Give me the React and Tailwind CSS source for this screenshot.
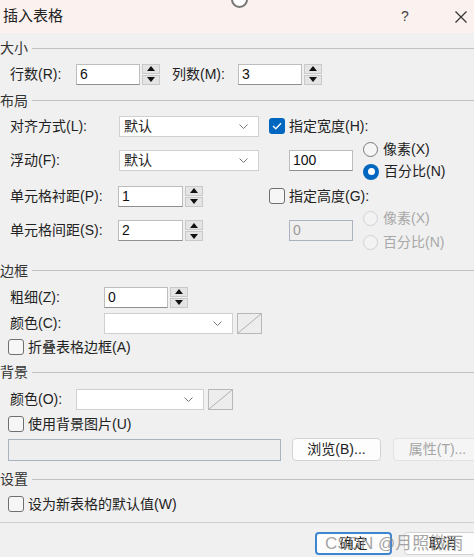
import React from 'react';

const FONT = "font-['Liberation_Sans','Noto_Sans_CJK_SC',sans-serif]";

function Spin() {
  return (
    <div className="ml-[2px] flex h-[21px] w-[18px] flex-col gap-[1px]">
      <div className="flex flex-1 items-center justify-center border border-[#c9c9c9] bg-[#e4e4e4]">
        <svg width="8" height="5" viewBox="0 0 8 5"><path d="M0 5L4 0L8 5Z" fill="#111" /></svg>
      </div>
      <div className="flex flex-1 items-center justify-center border border-[#c9c9c9] bg-[#e4e4e4]">
        <svg width="8" height="5" viewBox="0 0 8 5"><path d="M0 0L4 5L8 0Z" fill="#111" /></svg>
      </div>
    </div>
  );
}

function Field({ value, className }) {
  return (
    <div className={`flex h-[21px] items-center border border-[#bdbdbd] border-b-[#8f8f8f] bg-white pl-[3px] text-[14px] text-[#111] ${className}`}>
      {value}
    </div>
  );
}

function Select({ value, className }) {
  return (
    <div className={`flex h-[21px] items-center justify-between border border-[#d0d0d0] bg-white pl-[4px] pr-[10px] text-[14px] text-[#222] ${className}`}>
      <span>{value}</span>
      <svg width="9" height="5" viewBox="0 0 9 5"><path d="M0.5 0.5L4.5 4.5L8.5 0.5" fill="none" stroke="#777" strokeWidth="1" /></svg>
    </div>
  );
}

function Swatch() {
  return (
    <div className="ml-[4px] h-[21px] w-[25px] border border-[#b8b8b8] bg-[#ededed]">
      <svg width="23" height="19" viewBox="0 0 23 19"><path d="M0 19L23 0" stroke="#b0b0b0" strokeWidth="1" /></svg>
    </div>
  );
}

function Check({ checked, label }) {
  return (
    <div className="flex items-center">
      {checked ? (
        <span className="flex h-[16px] w-[16px] items-center justify-center rounded-[3px] bg-[#0067c0]">
          <svg width="10" height="8" viewBox="0 0 10 8"><path d="M1 4L3.8 6.8L9 1.2" fill="none" stroke="white" strokeWidth="1.3" /></svg>
        </span>
      ) : (
        <span className="h-[16px] w-[16px] rounded-[3px] border border-[#6f6f6f] bg-[#f6f6f6]" />
      )}
      <span className="ml-[4px] text-[14px] text-[#222]">{label}</span>
    </div>
  );
}

function Radio({ checked, disabled, label }) {
  let dot = <span className="h-[15px] w-[15px] rounded-full border border-[#7a7a7a] bg-[#f6f6f6]" />;
  if (checked) {
    dot = (
      <span className="flex h-[16px] w-[16px] items-center justify-center rounded-full bg-[#0067c0]">
        <span className="h-[7px] w-[7px] rounded-full bg-white" />
      </span>
    );
  }
  if (disabled) {
    dot = <span className="h-[15px] w-[15px] rounded-full border border-[#d2d2d2] bg-[#f3f3f3]" />;
  }
  return (
    <div className="flex h-[20px] items-center">
      {dot}
      <span className={disabled ? 'ml-[5px] text-[14px] text-[#a8a8a8]' : 'ml-[5px] text-[14px] text-[#222]'}>{label}</span>
    </div>
  );
}

function Header({ title, className }) {
  return (
    <div className={`flex items-center ${className}`}>
      <span className="text-[14px] leading-none text-[#333]">{title}</span>
      <div className="ml-[4px] flex-1 border-t border-[#c2c2c2]" />
    </div>
  );
}

function Label({ text, className }) {
  return <span className={`shrink-0 text-[14px] text-[#222] ${className}`}>{text}</span>;
}

export default function App() {
  return (
    <div className={`relative h-[557px] w-[474px] overflow-hidden bg-[#f0f0f0] ${FONT}`}>
      {/* title bar */}
      <div className="relative flex h-[33px] items-center bg-[#fbf1ee] pl-[3px]">
        <span className="text-[15px] text-[#222]">插入表格</span>
        <span className="absolute left-[401px] top-[6px] text-[14px] text-[#444]">?</span>
        <svg className="absolute left-[455px] top-[11px]" width="12" height="12" viewBox="0 0 12 12">
          <path d="M0.5 0.5L11.5 11.5M11.5 0.5L0.5 11.5" stroke="#333" strokeWidth="1.2" />
        </svg>
        <div className="absolute left-[231px] top-[-9px] h-[17px] w-[17px] rounded-full border-2 border-[#777] bg-white" />
      </div>

      <Header title="大小" className="h-[30px]" />
      <div className="flex h-[22px] items-center pl-[10px]">
        <Label text="行数(R):" className="w-[66px]" />
        <Field value="6" className="w-[64px]" />
        <Spin />
        <Label text="列数(M):" className="ml-[12px] w-[66px]" />
        <Field value="3" className="w-[64px]" />
        <Spin />
      </div>

      <Header title="布局" className="h-[31px]" />
      <div className="flex h-[20px] items-center pl-[10px]">
        <Label text="对齐方式(L):" className="w-[109px]" />
        <Select value="默认" className="w-[140px]" />
        <div className="ml-[10px]">
          <Check checked label="指定宽度(H):" />
        </div>
      </div>
      <div className="flex h-[49px] items-center pl-[10px]">
        <Label text="浮动(F):" className="w-[109px]" />
        <Select value="默认" className="w-[140px]" />
        <Field value="100" className="ml-[30px] w-[64px]" />
        <div className="ml-[10px] flex flex-col gap-[2px]">
          <Radio label="像素(X)" />
          <Radio checked label="百分比(N)" />
        </div>
      </div>
      <div className="flex h-[22px] items-center pl-[10px]">
        <Label text="单元格衬距(P):" className="w-[108px]" />
        <Field value="1" className="w-[65px]" />
        <Spin />
        <div className="ml-[66px]">
          <Check label="指定高度(G):" />
        </div>
      </div>
      <div className="flex h-[47px] items-center pl-[10px]">
        <Label text="单元格间距(S):" className="w-[108px]" />
        <Field value="2" className="w-[65px]" />
        <Spin />
        <div className="ml-[86px] flex h-[21px] w-[64px] items-center border border-[#aab3bf] bg-[#efefef] pl-[3px] text-[14px] text-[#999]">0</div>
        <div className="ml-[10px] flex flex-col gap-[4px]">
          <Radio disabled label="像素(X)" />
          <Radio disabled label="百分比(N)" />
        </div>
      </div>

      <Header title="边框" className="h-[33px]" />
      <div className="flex h-[20px] items-center pl-[10px]">
        <Label text="粗细(Z):" className="w-[94px]" />
        <Field value="0" className="w-[64px]" />
        <Spin />
      </div>
      <div className="flex h-[33px] items-center pl-[10px]">
        <Label text="颜色(C):" className="w-[94px]" />
        <Select value="" className="w-[129px]" />
        <Swatch />
      </div>
      <div className="flex h-[14px] items-center pl-[8px]">
        <Check label="折叠表格边框(A)" />
      </div>

      <Header title="背景" className="h-[36px]" />
      <div className="flex h-[18px] items-center pl-[10px]">
        <Label text="颜色(O):" className="w-[66px]" />
        <Select value="" className="w-[128px]" />
        <Swatch />
      </div>
      <div className="flex h-[32px] items-center pl-[8px]">
        <Check label="使用背景图片(U)" />
      </div>
      <div className="flex h-[19px] items-center pl-[8px]">
        <div className="h-[22px] w-[273px] shrink-0 border border-[#a9b4c1] bg-[#eeeeee]" />
        <div className="ml-[11px] flex h-[23px] w-[89px] shrink-0 items-center justify-center rounded-[4px] border border-[#d3d3d3] bg-[#fdfdfd] text-[14px] text-[#222]">浏览(B)...</div>
        <div className="ml-[12px] flex h-[23px] w-[89px] shrink-0 items-center justify-center rounded-[4px] border border-[#e2e2e2] bg-[#f5f5f5] text-[14px] text-[#a5a5a5]">属性(T)...</div>
      </div>

      <Header title="设置" className="h-[40px]" />
      <div className="flex h-[10px] items-center pl-[8px]">
        <Check label="设为新表格的默认值(W)" />
      </div>
      <div className="h-[13px]" />
      <div className="border-t border-[#cfcfcf]" />
      <div className="mt-[9px] flex pl-[315px]">
        <div className="flex h-[23px] w-[77px] shrink-0 items-center justify-center rounded-[4px] border-2 border-[#3f86d0] bg-[#fdfdfd] text-[14px] text-[#222]">确定</div>
        <div className="ml-[12px] flex h-[23px] w-[77px] shrink-0 items-center justify-center rounded-[4px] border border-[#d3d3d3] bg-[#fdfdfd] text-[14px] text-[#222]">取消</div>
      </div>

      {/* watermark */}
      <div className="absolute left-[325px] top-[531px] whitespace-nowrap text-[17px] text-[#8c8c8c]/80">CSDN @月照微雨</div>
    </div>
  );
}
